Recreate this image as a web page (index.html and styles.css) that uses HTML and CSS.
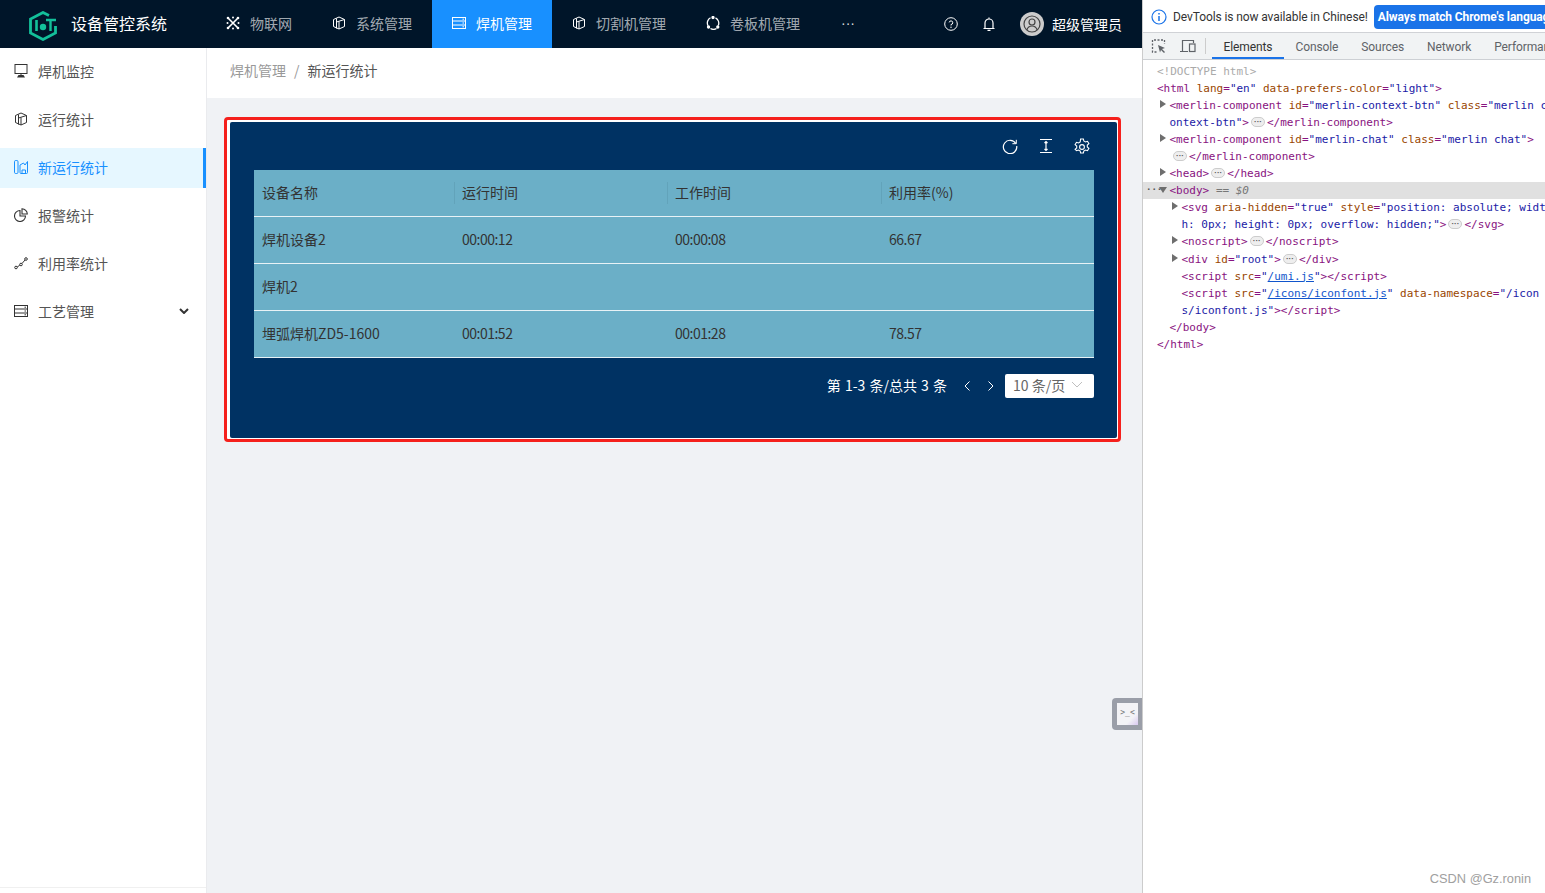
FILE: index.html
```html
<!DOCTYPE html>
<html lang="zh-CN">
<head>
    <meta charset="UTF-8">
    <title>设备管控系统</title>
    <link rel="stylesheet" href="styles.css">
</head>
<body>
<div class="app">
    <header class="topbar">
        <div class="brand">
            <svg class="logo" viewBox="0 0 30 30" width="30" height="30" fill="none" stroke="#13c09a">
                <path d="M21 4.500 15 1.500 2.500 8v14L15 28.500 27.500 22V15" stroke-width="2.800"/>
                <path d="M8.500 9v11" stroke-width="2.600"/>
                <circle cx="15" cy="16" r="3.200" fill="#13c09a" stroke="none"/>
                <path d="M18 9h10M22.500 9v11" stroke-width="2.400"/>
            </svg>
            <span class="brand-name">设备管控系统</span>
        </div>
        <nav class="nav">
            <a class="nav-item">
                <svg class="ico iot" viewBox="0 0 14 14" fill="#fff" stroke="#fff" stroke-width="1.600"><path d="M2.500 2.500l9 9M11.500 2.500l-9 9" fill="none"/><circle cx="2" cy="2" r="1.300" stroke="none"/><circle cx="12" cy="2" r="1.300" stroke="none"/><circle cx="2" cy="12" r="1.300" stroke="none"/><circle cx="12" cy="12" r="1.300" stroke="none"/><circle cx="7" cy="1.500" r="1" stroke="none"/><circle cx="7" cy="12.500" r="1" stroke="none"/><circle cx="1.500" cy="7" r="1" stroke="none"/><circle cx="12.500" cy="7" r="1" stroke="none"/></svg>
                物联网
            </a>
            <a class="nav-item">
                <svg class="ico" viewBox="0 0 14 14" fill="none" stroke="#fff"><path d="M7 1 12.500 3.500v7L7 13 1.500 10.500v-7z"/><path d="M4.500 2.500v10M4.500 6 12.500 3.500M7 5.500V13"/></svg>
                系统管理
            </a>
            <a class="nav-item active">
                <svg class="ico" viewBox="0 0 14 14" fill="none" stroke="currentColor"><rect x="0.500" y="1.500" width="13" height="11"/><path d="M.5 5h13M.5 9h13M10.500 3.200h1.500M10.500 7h1.500M10.500 10.800h1.500"/></svg>
                焊机管理
            </a>
            <a class="nav-item">
                <svg class="ico" viewBox="0 0 14 14" fill="none" stroke="#fff"><path d="M7 1 12.500 3.500v7L7 13 1.500 10.500v-7z"/><path d="M4.500 2.500v10M4.500 6 12.500 3.500M7 5.500V13"/></svg>
                切割机管理
            </a>
            <a class="nav-item">
                <svg class="ico" viewBox="0 0 14 14" fill="none" stroke="#fff" stroke-width="1.300"><path d="M4.500 1.800a6 6 0 0 0-2.500 8M4.500 12.500a6 6 0 0 0 6 0M12.300 9.500A6 6 0 0 0 9.500 1.800"/><circle cx="7" cy="1.500" r="1" fill="#fff"/><circle cx="2.500" cy="11" r="1" fill="#fff"/><circle cx="11.800" cy="11" r="1" fill="#fff"/></svg>
                卷板机管理
            </a>
            <a class="nav-more">···</a>
        </nav>
        <div class="topbar-right">
            <svg class="top-ico" viewBox="0 0 14 14" fill="none" stroke="#fff"><circle cx="7" cy="7" r="6.300"/><path d="M5.200 5.400A1.800 1.800 0 1 1 7 7.500V8.500"/><circle cx="7" cy="10.300" r=".7" fill="#fff" stroke="none"/></svg>
            <svg class="top-ico" viewBox="0 0 14 14" fill="none" stroke="#fff" stroke-width="1.200"><path d="M1.500 11.500h11M3 11.500V6a4 4 0 0 1 8 0v5.500M5.500 13.400h3M7 .5V2"/></svg>
            <div class="user">
                <span class="avatar">
                    <svg viewBox="0 0 24 24" width="24" height="24" fill="none" stroke="#444" stroke-width="1.200"><circle cx="12" cy="12" r="8"/><circle cx="12" cy="10" r="3"/><path d="M6.800 18c1-3 3-4 5.200-4s4.200 1 5.200 4"/></svg>
                </span>
                超级管理员
            </div>
        </div>
    </header>

    <div class="body-row">
        <aside class="sider">
            <ul class="menu">
                <li class="menu-item">
                    <svg class="ico" viewBox="0 0 14 14" fill="none" stroke="currentColor"><rect x="1" y=".5" width="12" height="9"/><path d="M7 9.500V12" /><path d="M4.500 11h5l1.500 2.500H3z" fill="currentColor" stroke="none"/></svg>
                    焊机监控
                </li>
                <li class="menu-item">
                    <svg class="ico" viewBox="0 0 14 14" fill="none" stroke="currentColor"><path d="M7 1 12.500 3.500v7L7 13 1.500 10.500v-7z"/><path d="M4.500 2.500v10M4.500 6 12.500 3.500M7 5.500V13"/></svg>
                    运行统计
                </li>
                <li class="menu-item selected">
                    <svg class="ico" viewBox="0 0 14 14" fill="none" stroke="currentColor"><rect x=".5" y=".5" width="3.500" height="13" rx="1.200"/><path d="M6 5v7.500a1 1 0 0 0 1 1h5.500a1 1 0 0 0 1-1V1.500L11 5 9.500 3z"/><path d="M8 13.500V10h3.500v3.500"/></svg>
                    新运行统计
                </li>
                <li class="menu-item">
                    <svg class="ico" viewBox="0 0 14 14" fill="none" stroke="currentColor" stroke-width="1.100"><path d="M6 2.500a5.500 5.500 0 1 0 5.500 5.500H6z"/><path d="M8 .7V6h5.300A5.400 5.400 0 0 0 8 .7z"/></svg>
                    报警统计
                </li>
                <li class="menu-item">
                    <svg class="ico" viewBox="0 0 14 14" fill="none" stroke="currentColor"><circle cx="2" cy="11.500" r="1.300"/><circle cx="7" cy="8.500" r="1.300"/><circle cx="12" cy="3" r="1.300"/><path d="M3.200 11 5.800 9.200M8 7.500l3-3.500"/></svg>
                    利用率统计
                </li>
                <li class="menu-item">
                    <svg class="ico" viewBox="0 0 14 14" fill="none" stroke="currentColor"><rect x="0.500" y="1.500" width="13" height="11"/><path d="M.5 5h13M.5 9h13M10.500 3.200h1.500M10.500 7h1.500M10.500 10.800h1.500"/></svg>
                    工艺管理
                    <svg class="caret" viewBox="0 0 10 6" width="10" height="6" fill="none" stroke="#333" stroke-width="2"><path d="M1 1l4 4 4-4"/></svg>
                </li>
            </ul>
            <div class="sider-foot"></div>
        </aside>

        <main class="main">
            <div class="breadcrumb">
                <span class="crumb-link">焊机管理</span>
                <span class="crumb-sep">/</span>
                <span class="crumb-current">新运行统计</span>
            </div>
            <div class="content">
                <div class="highlight-box">
                    <section class="card">
                        <div class="tools">
                            <svg viewBox="0 0 16 16" width="16" height="16" fill="none" stroke="#fff" stroke-width="1.200"><path d="M13.800 5.500A6.700 6.700 0 1 0 14.700 8"/><path d="M14.300 1.800v3.900h-3.900" stroke-width="1"/></svg>
                            <svg viewBox="0 0 16 16" width="16" height="16" fill="none" stroke="#fff" stroke-width="1.200"><path d="M2 1.500h12M2 14.500h12M8 3.500v9M6.500 5 8 3.500 9.500 5M6.500 11 8 12.500 9.500 11"/></svg>
                            <svg viewBox="0 0 16 16" width="16" height="16" fill="none" stroke="#fff" stroke-width="1.100"><path d="M6.600 1h2.800l.4 2 1.700 1 2-.7 1.400 2.400-1.600 1.300v2l1.600 1.300-1.400 2.400-2-.7-1.700 1-.4 2H6.600l-.4-2-1.700-1-2 .7L1.100 11.300l1.600-1.300V8L1.100 6.700 2.500 4.300l2 .7 1.700-1z"/><circle cx="8" cy="9" r="2.400"/></svg>
                        </div>
                        <table class="stats">
                            <thead>
                                <tr>
                                    <th class="col-name">设备名称</th>
                                    <th class="col-run">运行时间</th>
                                    <th class="col-work">工作时间</th>
                                    <th>利用率(%)</th>
                                </tr>
                            </thead>
                            <tbody>
                                <tr><td>焊机设备2</td><td class="num">00:00:12</td><td class="num">00:00:08</td><td class="num">66.67</td></tr>
                                <tr><td>焊机2</td><td></td><td></td><td></td></tr>
                                <tr><td>埋弧焊机ZD5-1600</td><td class="num">00:01:52</td><td class="num">00:01:28</td><td class="num">78.57</td></tr>
                            </tbody>
                        </table>
                        <div class="pager">
                            <span class="pager-total">第 1-3 条/总共 3 条</span>
                            <svg class="pager-arrow" viewBox="0 0 8 12" width="8" height="12" fill="none" stroke="#fff"><path d="M6.500 1.500 2 6l4.500 4.500"/></svg>
                            <svg class="pager-arrow" viewBox="0 0 8 12" width="8" height="12" fill="none" stroke="#fff"><path d="M1.500 1.500 6 6l-4.500 4.500"/></svg>
                            <div class="page-size">10 条/页
                                <svg viewBox="0 0 12 7" width="12" height="7" fill="none" stroke="#bfbfbf"><path d="M1 1l5 5 5-5"/></svg>
                            </div>
                        </div>
                    </section>
                </div>
            </div>
            <div class="float-btn"><span class="float-face">&gt;_&lt;</span></div>
        </main>
    </div>
</div>

<aside class="devtools">
    <div class="dt-info">
        <svg viewBox="0 0 16 16" width="16" height="16" fill="none" stroke="#1a73e8" stroke-width="1.200"><circle cx="8" cy="8" r="7"/><path d="M8 7v5M8 4v1.500" stroke-width="1.500"/></svg>
        <span>DevTools is now available in Chinese!</span>
        <button class="dt-match">Always match Chrome's language</button>
    </div>
    <div class="dt-tabs">
        <svg viewBox="0 0 16 16" width="16" height="16" fill="none" stroke="#5f6368" stroke-width="1.300"><path d="M5.500 14H1.500V2h12v4" stroke-dasharray="2 1.500"/><path d="M7 7l7 3-3 1 3 3-1 1-3-3-1 2.500z" fill="#5f6368" stroke="none"/></svg>
        <svg class="dt-device" viewBox="0 0 18 16" width="18" height="16" fill="none" stroke="#5f6368" stroke-width="1.200"><path d="M1 13.500h8M3.500 13V2.500h11V5"/><rect x="10.500" y="6" width="5.500" height="7.500"/></svg>
        <span class="dt-divider"></span>
        <a class="dt-tab current">Elements</a>
        <a class="dt-tab">Console</a>
        <a class="dt-tab">Sources</a>
        <a class="dt-tab">Network</a>
        <a class="dt-tab">Performance</a>
    </div>
    <div class="dt-code">
        <div class="ln lv0 doctype">&lt;!DOCTYPE html&gt;</div>
        <div class="ln lv0"><b>&lt;html</b> <i>lang</i>=<u>"en"</u> <i>data-prefers-color</i>=<u>"light"</u><b>&gt;</b></div>
        <div class="ln lv1 arrow"><b>&lt;merlin-component</b> <i>id</i>=<u>"merlin-context-btn"</u> <i>class</i>=<u>"merlin c</u></div>
        <div class="ln lv1"><u>ontext-btn"</u><b>&gt;</b><span class="dots">···</span><b>&lt;/merlin-component&gt;</b></div>
        <div class="ln lv1 arrow"><b>&lt;merlin-component</b> <i>id</i>=<u>"merlin-chat"</u> <i>class</i>=<u>"merlin chat"</u><b>&gt;</b></div>
        <div class="ln lv1b"><span class="dots">···</span><b>&lt;/merlin-component&gt;</b></div>
        <div class="ln lv1 arrow"><b>&lt;head&gt;</b><span class="dots">···</span><b>&lt;/head&gt;</b></div>
        <div class="ln lv1 sel open"><span class="sel-dots">···</span><b>&lt;body&gt;</b> <em>== $0</em></div>
        <div class="ln lv2 arrow"><b>&lt;svg</b> <i>aria-hidden</i>=<u>"true"</u> <i>style</i>=<u>"position: absolute; widt</u></div>
        <div class="ln lv2"><u>h: 0px; height: 0px; overflow: hidden;"</u><b>&gt;</b><span class="dots">···</span><b>&lt;/svg&gt;</b></div>
        <div class="ln lv2 arrow"><b>&lt;noscript&gt;</b><span class="dots">···</span><b>&lt;/noscript&gt;</b></div>
        <div class="ln lv2 arrow"><b>&lt;div</b> <i>id</i>=<u>"root"</u><b>&gt;</b><span class="dots">···</span><b>&lt;/div&gt;</b></div>
        <div class="ln lv2"><b>&lt;script</b> <i>src</i>=<u>"<a>/umi.js</a>"</u><b>&gt;&lt;/script&gt;</b></div>
        <div class="ln lv2"><b>&lt;script</b> <i>src</i>=<u>"<a>/icons/iconfont.js</a>"</u> <i>data-namespace</i>=<u>"/icon</u></div>
        <div class="ln lv2"><u>s/iconfont.js"</u><b>&gt;&lt;/script&gt;</b></div>
        <div class="ln lv1"><b>&lt;/body&gt;</b></div>
        <div class="ln lv0"><b>&lt;/html&gt;</b></div>
    </div>
    <div class="watermark">CSDN @Gz.ronin</div>
</aside>
</body>
</html>
```

FILE: styles.css
```css
* {
    box-sizing: border-box;
}
html, body {
    height: 100%;
    margin: 0;
    overflow: hidden;
}
body {
    display: flex;
    font-family: "Noto Sans CJK SC", "Noto Sans", sans-serif;
    font-size: 14px;
    color: #333;
    background: #fff;
}
.app {
    width: 1143px;
    height: 893px;
    display: flex;
    flex-direction: column;
    border-right: 1px solid #ccc;
}

/* top bar */
.topbar {
    height: 48px;
    flex: none;
    display: flex;
    align-items: center;
    background: #001529;
    color: #fff;
}
.brand {
    width: 206px;
    padding-left: 28px;
    display: flex;
    align-items: center;
    gap: 13px;
}
.logo {
    flex: none;
    margin-top: 4px;
}
.brand-name {
    font-size: 16px;
    margin-bottom: 3px;
}
.nav {
    display: flex;
    height: 48px;
    align-items: stretch;
}
.nav-item {
    display: flex;
    align-items: center;
    gap: 10px;
    padding: 0 20px 2px;
    color: rgba(255, 255, 255, 0.65);
}
.nav-item.active {
    background: #1890ff;
    color: #fff;
}
.ico {
    width: 14px;
    height: 14px;
    flex: none;
}
.nav-more {
    display: flex;
    align-items: center;
    padding: 0 20px 3px 21px;
    color: rgba(255, 255, 255, 0.85);
    font-family: "Liberation Sans", sans-serif;
    font-size: 14px;
}
.topbar-right {
    margin-left: auto;
    display: flex;
    align-items: center;
    padding-right: 20px;
}
.top-ico {
    width: 14px;
    height: 14px;
    margin-right: 24px;
}
.user {
    display: flex;
    align-items: center;
    gap: 8px;
    padding-bottom: 1px;
}
.avatar {
    width: 24px;
    height: 24px;
    border-radius: 50%;
    background: #ccc;
    display: flex;
}

/* page body */
.body-row {
    flex: 1;
    display: flex;
    min-height: 0;
}
.sider {
    width: 207px;
    flex: none;
    display: flex;
    flex-direction: column;
    background: #fff;
    border-right: 1px solid #eaebee;
    box-shadow: 1px 0 4px rgba(0, 21, 41, 0.04);
}
.menu {
    list-style: none;
    margin: 0;
    padding: 4px 0 0;
    display: flex;
    flex-direction: column;
    gap: 8px;
    flex: 1;
}
.menu-item {
    height: 40px;
    display: flex;
    align-items: center;
    gap: 10px;
    padding: 0 17px 2px 14px;
    color: #555;
}
.menu-item .ico {
    color: #333;
}
.menu-item.selected {
    background: #e6f7ff;
    color: #1890ff;
    border-right: 3px solid #1890ff;
}
.menu-item.selected .ico {
    color: #1890ff;
}
.caret {
    margin-left: auto;
}
.sider-foot {
    height: 6px;
    border-top: 1px solid #f0f0f0;
}

.main {
    flex: 1;
    display: flex;
    flex-direction: column;
    min-width: 0;
    position: relative;
    background: #f0f2f5;
}
.breadcrumb {
    height: 50px;
    flex: none;
    padding: 0 0 6px 23px;
    display: flex;
    align-items: center;
    gap: 8px;
    background: #fff;
}
.crumb-link {
    color: #999;
}
.crumb-sep {
    color: #999;
}
.crumb-current {
    color: #555;
}
.content {
    padding: 19px 21px 0 17px;
}
.highlight-box {
    border: 3px solid #f5201c;
    border-radius: 4px;
    padding: 2px 1px 1px 3px;
    background: #fff;
}
.card {
    height: 316px;
    padding: 16px 23px 0 24px;
    background: #003263;
    border-radius: 2px;
}
.tools {
    height: 32px;
    display: flex;
    justify-content: flex-end;
    gap: 20px;
    padding-right: 4px;
}
.stats {
    width: 840px;
    border-collapse: collapse;
    table-layout: fixed;
    background: #6bafc7;
    color: #333;
}
.stats th, .stats td {
    height: 47px;
    padding: 0 8px 2px;
    font-weight: 400;
    text-align: left;
    border-bottom: 1px solid #e8f2f6;
}
.stats th {
    position: relative;
    height: 46px;
}
.stats th + th::before {
    content: "";
    position: absolute;
    left: 0;
    top: 12px;
    height: 22px;
    width: 1px;
    background: #62a3ba;
}
.stats .num {
    letter-spacing: -0.5px;
}
.col-name {
    width: 200px;
}
.col-run {
    width: 213px;
}
.col-work {
    width: 214px;
}
.pager {
    height: 24px;
    margin-top: 16px;
    display: flex;
    align-items: center;
    justify-content: flex-end;
    color: #fff;
}
.pager-total {
    margin-right: 16px;
    padding-bottom: 2px;
    word-spacing: 1px;
}
.pager-arrow {
    margin-right: 16px;
}
.page-size {
    width: 89px;
    height: 24px;
    margin-left: -6px;
    padding: 0 11px 2px 8px;
    display: flex;
    align-items: center;
    justify-content: space-between;
    background: #fff;
    border-radius: 2px;
    color: #666;
}

/* floating tab on the right edge */
.float-btn {
    position: absolute;
    right: 0;
    top: 650px;
    width: 30px;
    height: 32px;
    padding: 5px 4px 5px 5px;
    background: #9a9ea8;
    border-radius: 4px 0 0 4px;
}
.float-face {
    display: block;
    height: 22px;
    font: 8px/20px "DejaVu Sans Mono", monospace;
    text-align: center;
    color: #777;
    background: linear-gradient(135deg, #f3f3f6 70%, #d9c8f0);
}

/* devtools panel */
.devtools {
    width: 402px;
    height: 893px;
    flex: none;
    position: relative;
    overflow: hidden;
    background: #fff;
    font-family: Roboto, "Noto Sans", sans-serif;
    font-size: 12px;
    color: #333;
}
.devtools svg {
    flex: none;
}
.dt-info {
    height: 33px;
    padding: 1px 0 0 8px;
    display: flex;
    align-items: center;
    gap: 6px;
    white-space: nowrap;
    letter-spacing: -0.1px;
    border-bottom: 1px solid #d0d2d6;
}
.dt-match {
    flex: none;
    height: 24px;
    padding: 0 4px;
    border: 0;
    border-radius: 4px;
    background: #1a73e8;
    color: #fff;
    font: 700 12px Roboto, sans-serif;
    letter-spacing: -0.1px;
}
.dt-tabs {
    height: 27px;
    padding-left: 8px;
    display: flex;
    align-items: center;
    background: #f1f3f4;
    border-bottom: 1px solid #cdd0d4;
    white-space: nowrap;
    letter-spacing: -0.1px;
    color: #5f6368;
}
.dt-device {
    margin-left: 12px;
}
.dt-divider {
    width: 1px;
    height: 16px;
    flex: none;
    margin: 0 6px 0 8px;
    background: #ccc;
}
.dt-tab {
    height: 26px;
    line-height: 28px;
    padding: 0 11.500px;
    flex: none;
}
.dt-tab.current {
    color: #333;
    border-bottom: 2px solid #1a73e8;
}
.dt-code {
    padding-top: 3px;
    font-family: "DejaVu Sans Mono", monospace;
    font-size: 11px;
    color: #881280;
}
.ln {
    height: 17.050px;
    line-height: 17px;
    white-space: nowrap;
    position: relative;
}
.ln b {
    font-weight: 400;
    color: #881280;
}
.ln i {
    font-style: normal;
    color: #994500;
}
.ln u {
    text-decoration: none;
    color: #1a1aa6;
}
.ln a {
    color: #1155cc;
    text-decoration: underline;
}
.ln em {
    color: #777;
}
.doctype {
    color: #aaa;
}
.lv0 {
    padding-left: 14px;
}
.lv1 {
    padding-left: 26.500px;
}
.lv1b {
    padding-left: 28px;
}
.lv2 {
    padding-left: 38.500px;
}
.arrow::before {
    content: "";
    position: absolute;
    top: 3px;
    margin-left: -10px;
    border-left: 6px solid #6e6e6e;
    border-top: 4px solid transparent;
    border-bottom: 4px solid transparent;
}
.sel {
    background: #e0e0e0;
}
.sel.open::before {
    content: "";
    position: absolute;
    top: 5px;
    left: 16px;
    border-top: 6px solid #6e6e6e;
    border-left: 4px solid transparent;
    border-right: 4px solid transparent;
}
.sel-dots {
    position: absolute;
    left: 3px;
    top: -1px;
    color: #555;
    font-weight: 700;
    font-size: 9px;
}
.dots {
    display: inline-block;
    width: 14px;
    height: 10px;
    margin: 0 2px 0 2px;
    vertical-align: -1px;
    border-radius: 5px;
    border: 1px solid #ccc;
    background: #eee;
    color: #555;
    font: 700 8px/7px "Liberation Sans", sans-serif;
    text-align: center;
    overflow: hidden;
}
.watermark {
    position: absolute;
    right: 14px;
    bottom: 7px;
    font-family: "Liberation Sans", sans-serif;
    font-size: 12.800px;
    color: #a0a0a0;
}
```
